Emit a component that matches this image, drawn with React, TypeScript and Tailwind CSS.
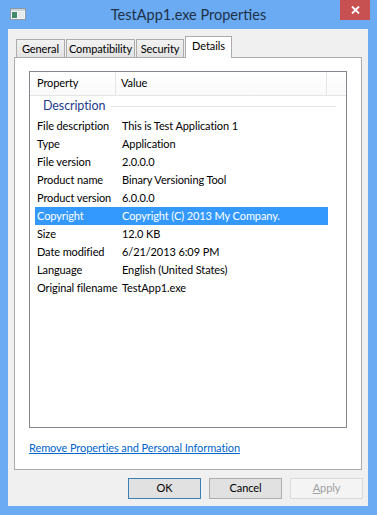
import React from 'react';

const rows: [string, string][] = [
  ['File description', 'This is Test Application 1'],
  ['Type', 'Application'],
  ['File version', '2.0.0.0'],
  ['Product name', 'Binary Versioning Tool'],
  ['Product version', '6.0.0.0'],
  ['Copyright', 'Copyright (C) 2013 My Company.'],
  ['Size', '12.0 KB'],
  ['Date modified', '6/21/2013 6:09 PM'],
  ['Language', 'English (United States)'],
  ['Original filename', 'TestApp1.exe'],
];

const tabs = [
  { label: 'General', w: 'w-[49px]' },
  { label: 'Compatibility', w: 'w-[69px]' },
  { label: 'Security', w: 'w-[48px]' },
];

function AppIcon() {
  return (
    <svg width="16" height="12" viewBox="0 0 16 12">
      <rect x="0.5" y="0.5" width="15" height="11" fill="#f4f4f4" stroke="#8a9aa8" />
      <rect x="1" y="1" width="14" height="2" fill="#c9d3dc" />
      <rect x="2" y="4" width="5" height="6" fill="#3f8a6a" />
      <rect x="8" y="4" width="6" height="6" fill="#e6e9ec" />
    </svg>
  );
}

export default function App() {
  return (
    <div className="w-[377px] h-[515px] bg-[#6aabf3] flex flex-col font-['Lato',sans-serif] text-[11px] tracking-[-0.1px] text-black overflow-hidden">
      {/* Title bar */}
      <div className="relative h-[29px] flex items-center justify-center shrink-0">
        <div className="absolute left-[10px] top-[8px]">
          <AppIcon />
        </div>
        <span className="text-[14.5px] tracking-normal text-[#1e3147] mt-[1px]">TestApp1.exe Properties</span>
        <div className="absolute right-[7px] top-0 w-[30px] h-[20px] bg-[#c75050] flex items-center justify-center">
          <svg width="9" height="8" viewBox="0 0 9 8">
            <path d="M1 0.5 L8 7.5 M8 0.5 L1 7.5" stroke="white" strokeWidth="1.8" />
          </svg>
        </div>
      </div>

      {/* Client area */}
      <div className="ml-[8px] mr-[9px] mb-[9px] flex-1 bg-[#f0f0f0] flex flex-col px-[6px] pt-[7px]">
        {/* Tabs */}
        <div className="flex items-end pl-[2px] h-[21px] gap-[1px]">
          {tabs.map((t) => (
            <div
              key={t.label}
              className={
                t.w +
                ' h-[18px] border border-b-0 border-[#acacac] bg-gradient-to-b from-[#f2f2f2] to-[#e3e3e3] flex items-center justify-center leading-none'
              }
            >
              {t.label}
            </div>
          ))}
          <div className="relative z-10 w-[47px] h-[22px] -mb-px bg-white border border-b-0 border-[#acacac] flex items-center justify-center leading-none pb-[4px]">
            Details
          </div>
        </div>

        {/* Tab panel */}
        <div className="h-[413px] bg-white border border-[#acacac] flex flex-col px-[14px] pt-[13px]">
          <div className="h-[357px] border border-[#828790] flex flex-col">
            {/* Header */}
            <div className="h-[24px] flex border-b border-[#e5e5e5] bg-gradient-to-b from-white to-[#fafafa]">
              <div className="w-[86px] pl-[7px] border-r border-[#e5e5e5] flex items-center">Property</div>
              <div className="w-[211px] pl-[5px] border-r border-[#e5e5e5] flex items-center">Value</div>
            </div>
            {/* Group */}
            <div className="h-[21px] flex items-center pl-[13px] pr-[10px] gap-[6px]">
              <span className="text-[12.5px] text-[#1e3c8c]">Description</span>
              <div className="flex-1 h-px bg-[#e2e5ea]" />
            </div>
            {/* Rows */}
            <div className="flex flex-col pl-[5px]">
              {rows.map(([k, v]) => {
                const sel = k === 'Copyright';
                return (
                  <div
                    key={k}
                    className={
                      'w-[293px] h-[18px] flex items-center ' +
                      (sel ? 'bg-[#3399ff] text-white' : '')
                    }
                  >
                    <div className="w-[87px] pl-[2px] whitespace-nowrap">{k}</div>
                    <div className="whitespace-nowrap">{v}</div>
                  </div>
                );
              })}
            </div>
          </div>
          <div className="mt-[12px]">
            <span className="text-[#0066cc] underline">Remove Properties and Personal Information</span>
          </div>
        </div>

        {/* Buttons */}
        <div className="flex justify-end gap-[8px] mt-[8px] -mr-[1px]">
          <button className="w-[73px] h-[21px] bg-[#e1e1e1] border border-[#3c7fb1] flex items-center justify-center">
            OK
          </button>
          <button className="w-[73px] h-[21px] bg-[#e1e1e1] border border-[#adadad] flex items-center justify-center">
            Cancel
          </button>
          <button className="w-[73px] h-[21px] bg-[#f4f4f4] border border-[#d9d9d9] text-[#a0a0a0] flex items-center justify-center">
            <span>
              <span className="underline">A</span>pply
            </span>
          </button>
        </div>
      </div>
    </div>
  );
}
